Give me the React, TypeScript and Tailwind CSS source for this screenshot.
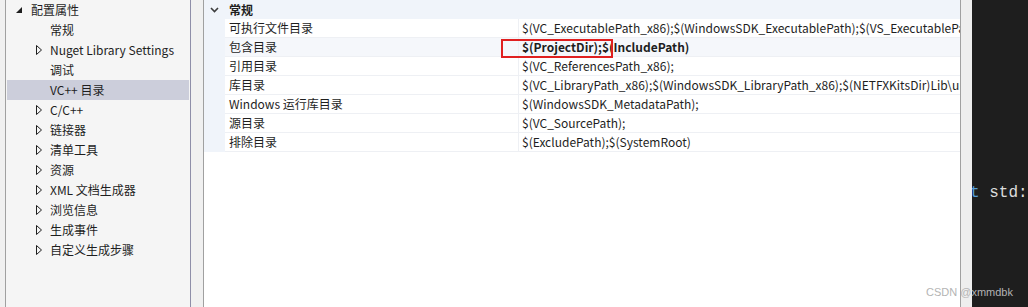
import React from "react";

const font = { fontFamily: '"Noto Sans CJK SC", "Noto Sans", sans-serif' };

function Filled() {
  return (
    <svg width="6" height="6" viewBox="0 0 6 6" className="shrink-0">
      <path d="M6 0 L6 6 L0 6 Z" fill="#1e1e1e" />
    </svg>
  );
}
function Outline() {
  return (
    <svg width="6" height="10" viewBox="0 0 6 10" className="shrink-0">
      <path d="M0.5 0.5 L5.5 5 L0.5 9.5 Z" fill="none" stroke="#1e1e1e" strokeWidth="1" />
    </svg>
  );
}

const tree: { label: string; arrow: boolean; sel?: boolean }[] = [
  { label: "常规", arrow: false },
  { label: "Nuget Library Settings", arrow: true },
  { label: "调试", arrow: false },
  { label: "VC++ 目录", arrow: false, sel: true },
  { label: "C/C++", arrow: true },
  { label: "链接器", arrow: true },
  { label: "清单工具", arrow: true },
  { label: "资源", arrow: true },
  { label: "XML 文档生成器", arrow: true },
  { label: "浏览信息", arrow: true },
  { label: "生成事件", arrow: true },
  { label: "自定义生成步骤", arrow: true },
];

const rows: { name: string; value: string; bold?: boolean; sel?: boolean }[] = [
  { name: "可执行文件目录", value: "$(VC_ExecutablePath_x86);$(WindowsSDK_ExecutablePath);$(VS_ExecutablePath);$(MSBuild_ExecutablePath)" },
  { name: "包含目录", value: "$(ProjectDir);$(IncludePath)", bold: true, sel: true },
  { name: "引用目录", value: "$(VC_ReferencesPath_x86);" },
  { name: "库目录", value: "$(VC_LibraryPath_x86);$(WindowsSDK_LibraryPath_x86);$(NETFXKitsDir)Lib\\um\\x86" },
  { name: "Windows 运行库目录", value: "$(WindowsSDK_MetadataPath);" },
  { name: "源目录", value: "$(VC_SourcePath);" },
  { name: "排除目录", value: "$(ExcludePath);$(SystemRoot)" },
];

export default function App() {
  return (
    <div className="relative w-[1028px] h-[307px] flex bg-[#f0f0f0] overflow-hidden text-[12px] text-[#1e1e1e]" style={font}>
      <div className="w-[5px] shrink-0 bg-[#f0f0f0]" />
      <div className="w-[186px] shrink-0 border-l border-[#a0a0a0] border-r border-r-[#8e8ea8] bg-[#f5f5f5] px-px">
        <div className="h-[20px] flex items-center pl-[9px]">
          <Filled />
          <span className="ml-[9px] leading-none">配置属性</span>
        </div>
        {tree.map((t) => (
          <div
            key={t.label}
            className={`h-[20px] flex items-center whitespace-nowrap ${t.arrow ? "pl-[29px]" : "pl-[43px]"} ${t.sel ? "bg-[#cccedb]" : ""}`}
          >
            {t.arrow ? <Outline /> : null}
            <span className={`leading-none ${t.arrow ? "ml-[8px]" : ""}`}>{t.label}</span>
          </div>
        ))}
      </div>
      <div className="w-[12px] shrink-0 bg-[#f0f0f0]" />
      <div className="w-[758px] shrink-0 border-l border-r border-[#a0a0a0] bg-white flex flex-col">
        <div className="h-[19px] shrink-0 bg-[#f0f4fa] flex items-center">
          <div className="w-[21px] shrink-0 flex justify-center">
            <svg width="9" height="6" viewBox="0 0 9 6">
              <path d="M1 1 L4.5 4.5 L8 1" fill="none" stroke="#3c3c3c" strokeWidth="1.6" />
            </svg>
          </div>
          <span className="pl-[4px] font-bold leading-none">常规</span>
        </div>
        {rows.map((r) => (
          <div key={r.name} className="h-[19px] shrink-0 flex">
            <div className="w-[21px] shrink-0 bg-[#f0f4fa]" />
            <div className={`flex flex-1 min-w-0 border-b border-[#eef0f4] ${r.sel ? "bg-[#f5f7fb]" : ""}`}>
              <div className="w-[294px] shrink-0 pl-[4px] flex items-center leading-none border-r border-[#eef0f4] whitespace-nowrap">
                {r.name}
              </div>
              <div
                className={`flex-1 min-w-0 pl-[3px] flex items-center whitespace-nowrap overflow-hidden leading-none ${r.bold ? "font-bold" : ""}`}
              >
                {r.value}
              </div>
            </div>
          </div>
        ))}
        <div className="flex-1 bg-white" />
      </div>
      <div className="w-[11px] shrink-0 bg-[#eeeeee]" />
      <div className="flex-1 bg-[#1e1e1e] relative overflow-hidden">
        <div
          className="absolute top-[185px] left-[-2px] whitespace-nowrap text-[16px] leading-none"
          style={{ fontFamily: '"Liberation Mono", monospace' }}
        >
          <span className="text-[#569cd6]">t</span>
          <span className="text-[#dcdcdc]"> std::</span>
        </div>
      </div>
      <div className="absolute left-[501px] top-[39px] w-[112px] h-[19px] border-2 border-[#e02020]" />
      <div
        className="absolute left-[926px] top-[287px] text-[11px] text-[#b4b4b4] whitespace-nowrap leading-none"
        style={{ fontFamily: '"Liberation Sans", sans-serif' }}
      >
        CSDN @xmmdbk
      </div>
    </div>
  );
}
